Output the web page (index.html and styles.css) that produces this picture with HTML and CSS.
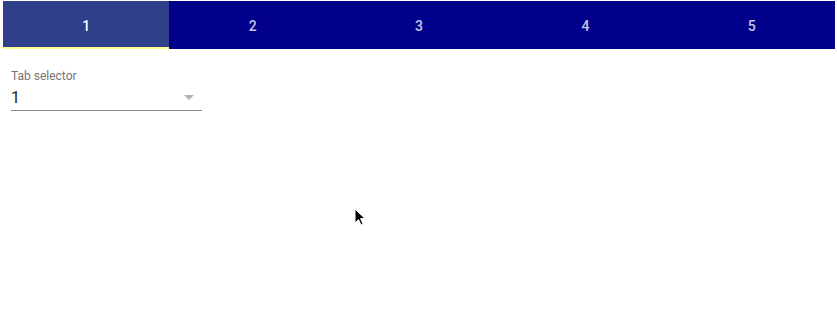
FILE: index.html
```html
<!DOCTYPE html>
<html lang="en">
<head>
    <meta charset="UTF-8">
    <meta name="viewport" content="width=device-width, initial-scale=1.0">
    <title>Tabs</title>
    <link rel="stylesheet" href="styles.css">
</head>
<body>
    <div class="tabs">
        <div class="tab active">1</div>
        <div class="tab">2</div>
        <div class="tab">3</div>
        <div class="tab">4</div>
        <div class="tab">5</div>
    </div>

    <div class="container">
        <div class="select">
            <label class="select-label">Tab selector</label>
            <div class="select-value">
                <span>1</span>
                <span class="arrow"></span>
            </div>
        </div>
    </div>

    <svg class="cursor" width="14" height="20" viewBox="0 0 14 20">
        <path d="M1 1 L1 15 L4.5 11.5 L7 17 L9 16 L6.6 10.6 L11 10.6 Z" fill="#000" stroke="#fff" stroke-width="1"/>
    </svg>
</body>
</html>
```

FILE: styles.css
```css
body {
    font-family: Roboto, "Liberation Sans", sans-serif;
    margin: 0;
    padding: 1px 2px 0 3px;
    background: #fff;
}

.tabs {
    display: flex;
    background-color: #00008b;
    height: 48px;
}

.tab {
    flex: 1;
    display: flex;
    align-items: center;
    justify-content: center;
    color: rgba(255, 255, 255, 0.78);
    font-size: 14px;
    font-weight: 500;
    box-sizing: border-box;
    padding-top: 1px;
}

.tab.active {
    background-color: #303f89;
    color: #fff;
    border-bottom: 2px solid #ffff8d;
    padding-top: 3px;
}

.container {
    padding: 20px 8px;
}

.select {
    width: 191px;
}

.select-label {
    display: block;
    font-size: 12px;
    color: #757575;
    line-height: 14px;
}

.select-value {
    display: flex;
    align-items: center;
    justify-content: space-between;
    font-size: 16px;
    color: #212121;
    height: 25px;
    padding-top: 2px;
    border-bottom: 1px solid #8a8a8a;
}

.arrow {
    width: 0;
    height: 0;
    border-left: 5px solid transparent;
    border-right: 5px solid transparent;
    border-top: 5px solid #b3b3b3;
    margin-right: 8px;
}

.cursor {
    position: absolute;
    left: 354px;
    top: 208px;
}
```
